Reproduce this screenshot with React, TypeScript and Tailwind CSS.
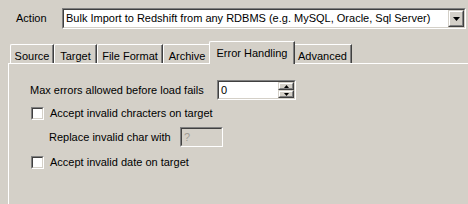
import React from "react";

const font = { fontFamily: '"Liberation Sans", Arial, sans-serif' };

function Sunken({ className, children }: { className: string; children?: React.ReactNode }) {
  // classic win2k sunken edge: gray/dark outside top-left, white/face bottom-right
  return (
    <div className={`border border-t-[#808080] border-l-[#808080] border-b-white border-r-white ${className}`}>
      <div className="flex h-full w-full items-center border border-t-[#404040] border-l-[#404040] border-b-[#d4d0c8] border-r-[#d4d0c8]">
        {children}
      </div>
    </div>
  );
}

function Raised({ className, children }: { className: string; children?: React.ReactNode }) {
  return (
    <div className={`border border-t-[#d4d0c8] border-l-[#d4d0c8] border-b-[#404040] border-r-[#404040] ${className}`}>
      <div className="flex h-full w-full items-center justify-center border border-t-white border-l-white border-b-[#808080] border-r-[#808080] bg-[#d4d0c8]">
        {children}
      </div>
    </div>
  );
}

function Checkbox() {
  return <Sunken className="h-[13px] w-[13px] shrink-0">
    <div className="h-full w-full bg-white" />
  </Sunken>;
}

const tabs = [
  { label: "Source", w: "w-[44px]" },
  { label: "Target", w: "w-[43px]" },
  { label: "File Format", w: "w-[66px]" },
  { label: "Archive", w: "w-[48px]" },
  { label: "Error Handling", w: "w-[86px]", active: true },
  { label: "Advanced", w: "w-[59px]" },
];

export default function App() {
  return (
    <div className="h-[204px] w-[468px] overflow-hidden bg-[#d4d0c8] text-[11px] text-black" style={font}>
      {/* Action row */}
      <div className="flex items-center pt-[8px]">
        <span className="w-[62px] pl-[16px]">Action</span>
        <Sunken className="h-[21px] w-[404px]">
          <div className="flex h-full flex-1 items-center bg-white pl-[2px]">
            Bulk Import to Redshift from any RDBMS (e.g. MySQL, Oracle, Sql Server)
          </div>
          <Raised className="h-full w-[16px]">
            <svg width="7" height="4" viewBox="0 0 7 4">
              <path d="M0 0h7L3.5 4z" fill="#000" />
            </svg>
          </Raised>
        </Sunken>
      </div>

      {/* Tabs */}
      <div className="mt-[12px] flex items-end pl-[10px]">
        {tabs.map((t) =>
          t.active ? (
            <div
              key={t.label}
              className={`relative z-10 -mx-[2px] -mb-px flex h-[23px] ${t.w} items-start justify-center rounded-tl-[2px] border-l border-t border-r border-l-white border-t-white border-r-[#404040] bg-[#d4d0c8] pt-[3px] shadow-[inset_-1px_0_0_#808080]`}
            >
              {t.label}
            </div>
          ) : (
            <div
              key={t.label}
              className={`flex h-[19px] ${t.w} items-start justify-center rounded-tl-[2px] border-l border-t border-r border-l-white border-t-white border-r-[#404040] pt-[3px] shadow-[inset_-1px_0_0_#808080]`}
            >
              {t.label}
            </div>
          )
        )}
      </div>

      {/* Panel */}
      <div className="ml-[8px] h-[200px] border-l border-t border-white pl-[21px]">
        <div className="mt-[16px] flex h-[20px] items-center">
          <span className="w-[187px]">Max errors allowed before load fails</span>
          <Sunken className="h-[20px] w-[79px]">
            <div className="flex h-full flex-1 items-center bg-white pl-[2px]">0</div>
            <div className="flex h-full w-[16px] flex-col bg-white">
              <Raised className="h-1/2 w-full">
                <svg width="5" height="3" viewBox="0 0 5 3">
                  <path d="M2.5 0L5 3H0z" fill="#000" />
                </svg>
              </Raised>
              <Raised className="h-1/2 w-full">
                <svg width="5" height="3" viewBox="0 0 5 3">
                  <path d="M0 0h5L2.5 3z" fill="#000" />
                </svg>
              </Raised>
            </div>
          </Sunken>
        </div>

        <div className="mt-[7px] flex h-[13px] items-center gap-[6px] pl-[1px]">
          <Checkbox />
          <span>Accept invalid chracters on target</span>
        </div>

        <div className="mt-[7px] flex h-[20px] items-center pl-[19px]">
          <span className="w-[131px]">Replace invalid char with</span>
          <Sunken className="h-[20px] w-[43px]">
            <div className="flex h-full w-full items-center bg-[#d4d0c8] pl-[2px] text-[#a09c94]">?</div>
          </Sunken>
        </div>

        <div className="mt-[9px] flex h-[13px] items-center gap-[6px] pl-[1px]">
          <Checkbox />
          <span>Accept invalid date on target</span>
        </div>
      </div>
    </div>
  );
}
